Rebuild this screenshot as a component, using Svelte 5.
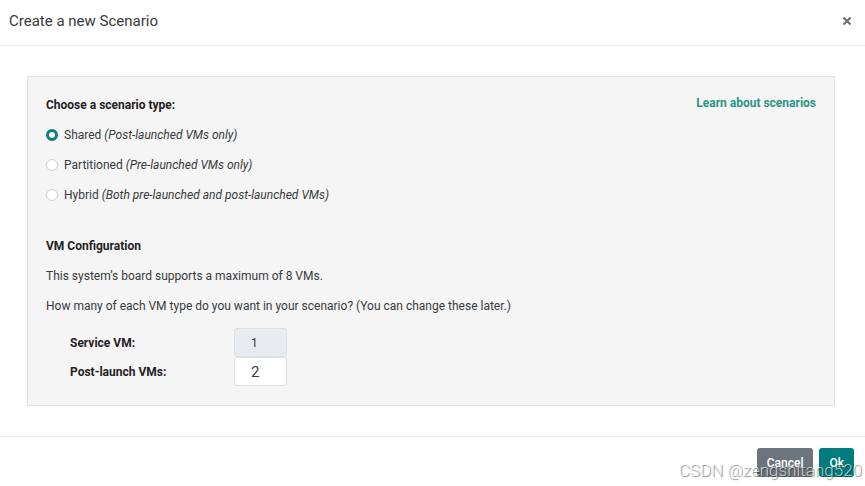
<script>
  let scenarioType = $state('shared');
  let serviceVms = $state(1);
  let postLaunchVms = $state(2);

  const maxVms = 8;

  const scenarioTypes = [
    { value: 'shared', name: 'Shared', note: '(Post-launched VMs only)' },
    { value: 'partitioned', name: 'Partitioned', note: '(Pre-launched VMs only)' },
    { value: 'hybrid', name: 'Hybrid', note: '(Both pre-launched and post-launched VMs)' }
  ];
</script>

<div class="modal">
  <header class="modal-header">
    <h1>Create a new Scenario</h1>
    <button type="button" class="close" aria-label="Close">
      <svg viewBox="0 0 10 10" width="10" height="10">
        <path d="M1.5 1.5 L8.5 8.5 M8.5 1.5 L1.5 8.5" />
      </svg>
    </button>
  </header>

  <main class="modal-body">
    <div class="panel">
      <div class="panel-top">
        <fieldset>
          <legend>Choose a scenario type:</legend>
          {#each scenarioTypes as type}
            <label class="choice">
              <input type="radio" name="scenario-type" value={type.value} bind:group={scenarioType} />
              <span>{type.name} <em>{type.note}</em></span>
            </label>
          {/each}
        </fieldset>
        <a href="#scenarios">Learn about scenarios</a>
      </div>

      <section>
        <h2>VM Configuration</h2>
        <p>This system’s board supports a maximum of {maxVms} VMs.</p>
        <p>How many of each VM type do you want in your scenario? (You can change these later.)</p>
        <div class="vm-counts">
          <label for="service-vm">Service VM:</label>
          <input id="service-vm" type="number" value={serviceVms} disabled />
          <label for="post-launch-vms">Post-launch VMs:</label>
          <input id="post-launch-vms" type="number" min="0" max={maxVms - 1} bind:value={postLaunchVms} />
        </div>
      </section>
    </div>
  </main>

  <footer class="modal-footer">
    <button type="button" class="btn cancel">Cancel</button>
    <button type="button" class="btn ok">Ok</button>
    <span class="watermark">CSDN @zengshitang520</span>
  </footer>
</div>

<style>
  :global(body) {
    margin: 0;
    background: #fff;
  }

  .modal {
    font-family: Roboto, 'Liberation Sans', sans-serif;
    font-size: 12px;
    line-height: 20px;
    color: #373a3c;
  }

  .modal-header {
    display: flex;
    align-items: center;
    justify-content: space-between;
    padding: 9px 13px 12px 9px;
    border-bottom: 1px solid #e9ebed;
  }

  h1 {
    margin: 0;
    font-size: 15px;
    line-height: 24px;
    font-weight: 400;
  }

  .close {
    display: flex;
    padding: 0;
    border: 0;
    background: none;
    cursor: pointer;
  }

  .close path {
    stroke: #6f6f6f;
    stroke-width: 2.2;
    fill: none;
  }

  .modal-body {
    padding: 30px 30px 30px 27px;
  }

  .panel {
    padding: 18px 18px 19px;
    background: #f5f5f5;
    border: 1px solid #dfe1e2;
  }

  .panel-top {
    display: flex;
    align-items: flex-start;
    justify-content: space-between;
    margin-bottom: 31px;
  }

  fieldset {
    min-width: 0;
    margin: 0;
    padding: 0;
    border: 0;
  }

  legend,
  h2 {
    margin: 0;
    padding: 0;
    font-size: 12px;
    line-height: 20px;
    font-weight: 700;
    color: #1f2224;
  }

  .choice {
    display: flex;
    align-items: center;
    gap: 6px;
    margin-top: 10px;
  }

  .choice input {
    appearance: none;
    box-sizing: border-box;
    width: 12px;
    height: 12px;
    margin: 0;
    border: 1px solid #cfd1d3;
    border-radius: 50%;
    background: #fff;
  }

  .choice input:checked {
    border: 3px solid #077e80;
  }

  a {
    line-height: 16px;
    font-weight: 700;
    color: #2b9486;
    text-decoration: none;
  }

  p {
    margin: 10px 0 0;
  }

  .vm-counts {
    display: grid;
    grid-template-columns: 164px 53px;
    align-items: center;
    margin-top: 12px;
    padding-left: 24px;
  }

  .vm-counts label {
    font-weight: 700;
    color: #1f2224;
  }

  .vm-counts input {
    appearance: textfield;
    box-sizing: border-box;
    width: 100%;
    height: 29px;
    padding: 0 0 0 16px;
    border: 1px solid #dcdfe3;
    border-radius: 3px;
    background: #fff;
    font-family: inherit;
    font-size: 15px;
    color: #373a3c;
  }

  .vm-counts input::-webkit-inner-spin-button {
    appearance: none;
    margin: 0;
  }

  .vm-counts input:disabled {
    background: #e8ecef;
    font-size: 12px;
  }

  .modal-footer {
    position: relative;
    display: flex;
    justify-content: flex-end;
    gap: 6px;
    padding: 11px 11px 8px;
    border-top: 1px solid #e9ebed;
  }

  .btn {
    height: 29px;
    padding: 0 10px;
    border: 0;
    border-radius: 3px;
    font-family: inherit;
    font-size: 12px;
    font-weight: 500;
    color: #fff;
    cursor: pointer;
  }

  .cancel {
    background: #6c757d;
  }

  .ok {
    background: #027b7e;
  }

  .watermark {
    position: absolute;
    right: 3px;
    bottom: 5px;
    font-size: 17px;
    font-weight: 300;
    color: rgba(255, 255, 255, 0.7);
    text-shadow: 1px 1px 1px rgba(0, 0, 0, 0.5);
    pointer-events: none;
  }
</style>
